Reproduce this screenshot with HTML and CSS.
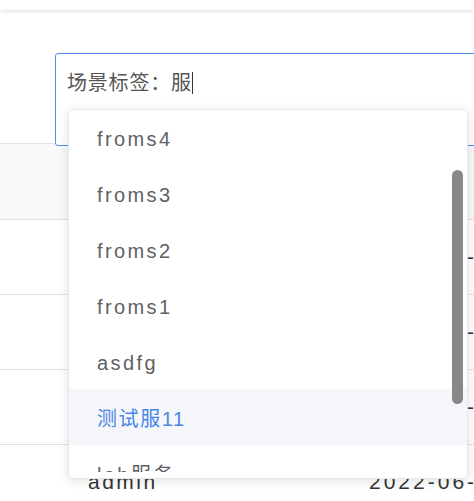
FILE: index.html
```html
<!DOCTYPE html>
<html lang="zh-CN">
<head>
<meta charset="utf-8">
<link rel="stylesheet" href="styles.css">
</head>
<body>
<div class="topbar"></div>
<div class="page">
  <div class="table">
    <div class="row head">
      <div class="cell c1">创建人</div>
      <div class="cell c2">创建时间</div>
    </div>
    <div class="row">
      <div class="cell c1">admin</div>
      <div class="cell c2">2022-06-01 10:00:00</div>
    </div>
    <div class="row">
      <div class="cell c1">admin</div>
      <div class="cell c2">2022-06-01 10:00:00</div>
    </div>
    <div class="row">
      <div class="cell c1">admin</div>
      <div class="cell c2">2022-06-01 10:00:00</div>
    </div>
    <div class="row">
      <div class="cell c1">admin</div>
      <div class="cell c2">2022-06-01 10:00:00</div>
    </div>
  </div>

  <div class="search">
    <span class="label">场景标签：</span><span class="value">服</span><span class="caret"></span>
  </div>

  <div class="dropdown">
    <div class="scroller">
      <ul class="options">
        <li class="option">froms4</li>
        <li class="option">froms3</li>
        <li class="option">froms2</li>
        <li class="option">froms1</li>
        <li class="option">asdfg</li>
        <li class="option active">测试服11</li>
        <li class="option">lab服务</li>
      </ul>
    </div>
    <div class="thumb"></div>
  </div>
</div>
</body>
</html>
```

FILE: styles.css
```css
* { box-sizing: border-box; }
html, body {
  margin: 0;
  padding: 0;
  background: #ffffff;
  overflow: hidden;
}
body {
  width: 474px;
  height: 501px;
  font-family: "Liberation Sans", "Noto Sans CJK SC", sans-serif;
  color: #333;
}
.topbar {
  height: 10px;
  background: #fff;
  box-shadow: 0 1px 5px rgba(0, 0, 0, 0.14);
  position: relative;
  z-index: 1;
}
.page {
  position: relative;
  padding-top: 133px;
  overflow: hidden;
  height: 491px;
}
.table {
  border-top: 1px solid #e2e4e8;
}
.row {
  display: grid;
  grid-template-columns: 368px 1fr;
  height: 75px;
  align-items: center;
  border-bottom: 1px solid #dfe1e5;
  font-size: 21px;
  letter-spacing: 3px;
  color: #333;
  white-space: nowrap;
  overflow: hidden;
}
.row.head {
  height: 76px;
  background: #f8f9fb;
}
.c1 { padding-left: 88px; letter-spacing: 2.5px; }
.c2 { padding-left: 1px; }

.search {
  position: absolute;
  left: 55px;
  top: 43px;
  width: 470px;
  height: 93px;
  border: 1px solid #4f8ef0;
  border-radius: 3px;
  background: #fff;
  padding: 16px 0 0 11px;
  display: flex;
  align-items: flex-start;
  font-size: 20px;
  letter-spacing: 0.8px;
  line-height: 26px;
  color: #555;
}
.caret {
  width: 1px;
  height: 22px;
  margin-top: 2px;
  background: #333;
}

.dropdown {
  position: absolute;
  left: 68px;
  top: 99px;
  width: 400px;
  height: 370px;
  border: 1px solid #e4e7ed;
  border-radius: 4px;
  background: #fff;
  box-shadow: 0 2px 12px rgba(0, 0, 0, 0.12);
  overflow: hidden;
  padding-bottom: 6px;
}
.scroller {
  height: 100%;
  overflow: hidden;
}
.options {
  list-style: none;
  margin: -1px 0 0;
  padding: 0;
}
.option {
  height: 56px;
  line-height: 56px;
  padding-left: 28px;
  padding-top: 2px;
  font-size: 20px;
  letter-spacing: 2.4px;
  color: #5f6064;
  white-space: nowrap;
}
.option.active {
  background: #f4f6f9;
  color: #4a86e8;
  letter-spacing: 1.6px;
}
.thumb {
  position: absolute;
  left: 383px;
  top: 60px;
  width: 11px;
  height: 234px;
  border-radius: 6px;
  background: #888;
}
```
